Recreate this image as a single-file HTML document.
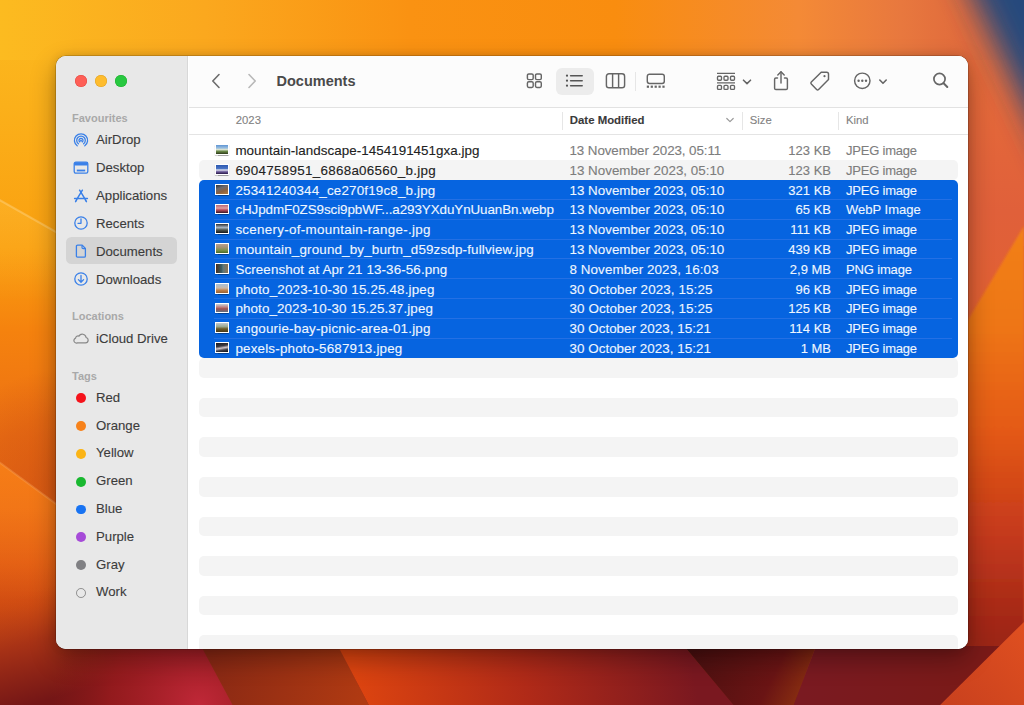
<!DOCTYPE html>
<html><head><meta charset="utf-8">
<style>
*{margin:0;padding:0;box-sizing:border-box}
html,body{width:1024px;height:705px;overflow:hidden}
body{position:relative;font-family:"Liberation Sans",sans-serif;background:#f59a14}
.row,.sbt{-webkit-text-stroke:0.12px currentColor}
#bg{position:absolute;left:0;top:0;width:1024px;height:705px}
#win{position:absolute;left:56px;top:56px;width:912px;height:593px;border-radius:10px;overflow:hidden;background:#fff;
 box-shadow:0 0 0 0.5px rgba(0,0,0,.3),0 0 10px rgba(0,0,0,.12),0 10px 26px rgba(0,0,0,.32)}
#side{position:absolute;left:0;top:0;width:132px;height:593px;background:#e8e8e8;border-right:1px solid #d8d8d8}
.tl{position:absolute;top:19px;width:12px;height:12px;border-radius:50%}
.sbh{position:absolute;left:16px;font-size:11px;line-height:13px;font-weight:bold;color:#a9a9a9;white-space:nowrap}
.sbt{position:absolute;left:40px;font-size:13.2px;line-height:15px;color:#3c3c3c;white-space:nowrap}
.sbi{position:absolute;left:17px;width:16px;height:16px;display:flex;align-items:center;justify-content:center}
.dot{position:absolute;left:19.9px;width:9.8px;height:9.8px;border-radius:50%}
.dot.work{border:1.4px solid #8c8c8c;background:transparent}
#selitem{position:absolute;left:9.8px;top:181.1px;width:111.2px;height:27px;border-radius:5.5px;background:#d4d4d4}
#main{position:absolute;left:133px;top:0;width:779px;height:593px;background:#fff}
#tb{position:absolute;left:0;top:0;width:779px;height:52px;border-bottom:1px solid #e2e2e2;background:#fcfcfc}
#title{position:absolute;left:87.5px;top:16.5px;font-size:14.5px;line-height:17px;font-weight:bold;color:#4a4a4a}
#hdr{position:absolute;left:0;top:52px;width:779px;height:27px;border-bottom:1px solid #e4e4e4}
.hd{position:absolute;top:5.5px;font-size:11.3px;line-height:13px;color:#828282;white-space:nowrap;-webkit-text-stroke:0.1px currentColor}
.hdiv{position:absolute;top:3.5px;width:1px;height:18px;background:#e6e6e6}
.stripe{position:absolute;left:10px;width:759px;height:19.8px;border-radius:5px;background:#f4f4f4}
#sel{position:absolute;left:10px;width:759px;border-radius:5px;background:#0664e0}
.sep{position:absolute;left:25px;width:738px;height:1px;background:#2470e4}
.row{position:absolute;left:0;width:779px;height:19.8px;font-size:13.4px;line-height:19.8px;color:#222;white-space:nowrap}
.row .sz,.row .kd{font-size:13px}
.row span{top:0.8px}
.row .nm{position:absolute;left:46.4px}
.row .dt{position:absolute;left:380.5px;color:#7d7d7d}
.row .sz{position:absolute;right:137px;color:#7d7d7d}
.row .kd{position:absolute;left:657px;color:#7d7d7d}
.row.sel,.row.sel span{color:#eef6ff}
.ico{position:absolute;left:25.8px;top:3.9px !important;width:14.2px;height:10.8px;background:#fff;box-shadow:0 0.5px 1px rgba(0,0,0,.35)}
.ico::after{content:"";position:absolute;left:1px;top:1px;right:1px;bottom:1px}
.i1::after{background:linear-gradient(#5f95d4 0%,#9cc0e0 35%,#d8e0d0 50%,#6a8a48 70%,#2e3a1a 100%)}
.i2::after{background:linear-gradient(#2a58b0 0%,#4a74c4 40%,#e0e4f0 55%,#6a5a98 75%,#2a1a48 100%)}
.i3::after{background:linear-gradient(160deg,#30343c 0%,#6a6a70 35%,#8a6040 65%,#b07a40 100%)}
.i4::after{background:linear-gradient(#b86878 0%,#e0a0a0 40%,#c05060 60%,#3a1828 100%)}
.i5::after{background:linear-gradient(#303438 0%,#a8b4c0 40%,#505850 65%,#18181a 100%)}
.i6::after{background:linear-gradient(#b8a090 0%,#a09070 40%,#7a9048 70%,#4a6a28 100%)}
.i7::after{background:linear-gradient(90deg,#4a3020 0%,#3a5a60 45%,#60787a 60%,#8a7050 100%)}
.i8::after{background:linear-gradient(#a8c0d8 0%,#c8b8a8 45%,#c08048 70%,#9a6030 100%)}
.i9::after{background:linear-gradient(#c8d0d8 0%,#c08080 40%,#a05050 60%,#607080 100%)}
.i10::after{background:linear-gradient(#c0c8d0 0%,#9aa890 40%,#6a5a28 65%,#4a3a18 100%)}
.i11::after{background:linear-gradient(170deg,#1a1a22 0%,#3a3840 35%,#d0c4c8 55%,#404048 75%,#101014 100%)}
.tbi{position:absolute}
</style></head><body>
<svg id="bg" width="1024" height="705" viewBox="0 0 1024 705">
 <defs>
  <linearGradient id="gTop" x1="0" y1="0" x2="1024" y2="0" gradientUnits="userSpaceOnUse">
   <stop offset="0" stop-color="#fcbb20"/>
   <stop offset="0.2" stop-color="#fba81e"/>
   <stop offset="0.4" stop-color="#fa9212"/>
   <stop offset="0.6" stop-color="#f98d0f"/>
   <stop offset="0.78" stop-color="#f48a36"/>
   <stop offset="0.88" stop-color="#e8783e"/>
   <stop offset="0.945" stop-color="#e06a3c"/>
   <stop offset="1" stop-color="#e06a3c"/>
  </linearGradient>
  <linearGradient id="gLeft" x1="0" y1="0" x2="0" y2="705" gradientUnits="userSpaceOnUse">
   <stop offset="0" stop-color="#fcbb20"/>
   <stop offset="0.15" stop-color="#fbb01a"/>
   <stop offset="0.35" stop-color="#faa010"/>
   <stop offset="0.47" stop-color="#f5820e"/>
   <stop offset="0.62" stop-color="#ec7014"/>
   <stop offset="0.72" stop-color="#ea6a16"/>
   <stop offset="0.8" stop-color="#e05a14"/>
   <stop offset="0.86" stop-color="#d04c12"/>
   <stop offset="0.92" stop-color="#b43a16"/>
   <stop offset="0.96" stop-color="#922616"/>
   <stop offset="1" stop-color="#761a16"/>
  </linearGradient>
  <linearGradient id="gRight" x1="0" y1="0" x2="0" y2="705" gradientUnits="userSpaceOnUse">
   <stop offset="0" stop-color="#e8703a"/>
   <stop offset="0.3" stop-color="#e0603a"/>
   <stop offset="0.5" stop-color="#e26030"/>
   <stop offset="1" stop-color="#c04020"/>
  </linearGradient>
  <linearGradient id="gRight2" x1="0" y1="230" x2="0" y2="705" gradientUnits="userSpaceOnUse">
   <stop offset="0" stop-color="#f2801a"/>
   <stop offset="0.2" stop-color="#ee7616"/>
   <stop offset="0.42" stop-color="#e45a12"/>
   <stop offset="0.62" stop-color="#c83c1c"/>
   <stop offset="0.82" stop-color="#a42818"/>
   <stop offset="1" stop-color="#861e16"/>
  </linearGradient>
  <linearGradient id="gNavy" x1="960" y1="0" x2="1024" y2="200" gradientUnits="userSpaceOnUse">
   <stop offset="0" stop-color="#2a4a7c" stop-opacity="0"/>
   <stop offset="0.35" stop-color="#2a4a7c" stop-opacity="0.9"/>
   <stop offset="1" stop-color="#2a4a7c" stop-opacity="1"/>
  </linearGradient>
  <linearGradient id="fb1" x1="0" y1="600" x2="30" y2="705" gradientUnits="userSpaceOnUse">
   <stop offset="0" stop-color="#c84a14" stop-opacity="0"/>
   <stop offset="0.45" stop-color="#a43016" stop-opacity="0.8"/>
   <stop offset="1" stop-color="#741616"/>
  </linearGradient>
  <radialGradient id="fb1c" cx="200" cy="705" r="150" gradientUnits="userSpaceOnUse">
   <stop offset="0" stop-color="#c02838" stop-opacity="1"/>
   <stop offset="0.6" stop-color="#a01c20" stop-opacity="0.7"/>
   <stop offset="1" stop-color="#8a1818" stop-opacity="0"/>
  </radialGradient>
  <linearGradient id="fb2" x1="210" y1="650" x2="360" y2="705" gradientUnits="userSpaceOnUse">
   <stop offset="0" stop-color="#882814"/>
   <stop offset="1" stop-color="#b03a12"/>
  </linearGradient>
  <linearGradient id="fb3" x1="360" y1="705" x2="690" y2="650" gradientUnits="userSpaceOnUse">
   <stop offset="0" stop-color="#dc4410"/>
   <stop offset="0.5" stop-color="#b02a18"/>
   <stop offset="1" stop-color="#7a1820"/>
  </linearGradient>
  <linearGradient id="fb4" x1="690" y1="650" x2="800" y2="705" gradientUnits="userSpaceOnUse">
   <stop offset="0" stop-color="#4a1010"/>
   <stop offset="0.7" stop-color="#6a1414"/>
   <stop offset="1" stop-color="#8a3010"/>
  </linearGradient>
  <linearGradient id="fb5" x1="800" y1="650" x2="960" y2="705" gradientUnits="userSpaceOnUse">
   <stop offset="0" stop-color="#7a1a22"/>
   <stop offset="1" stop-color="#7a1a18"/>
  </linearGradient>
  <linearGradient id="fb6" x1="1024" y1="620" x2="940" y2="705" gradientUnits="userSpaceOnUse">
   <stop offset="0" stop-color="#e05020"/>
   <stop offset="1" stop-color="#c8401e"/>
  </linearGradient>
  <linearGradient id="streak" x1="0" y1="0" x2="1" y2="0">
   <stop offset="0" stop-color="#fff" stop-opacity="0"/>
   <stop offset="0.5" stop-color="#fff" stop-opacity="0.25"/>
   <stop offset="1" stop-color="#fff" stop-opacity="0"/>
  </linearGradient>
  <radialGradient id="darkfacet" cx="60" cy="490" r="120" gradientUnits="userSpaceOnUse">
   <stop offset="0" stop-color="#c84a10" stop-opacity="0.6"/>
   <stop offset="0.6" stop-color="#c84a10" stop-opacity="0.3"/>
   <stop offset="1" stop-color="#c84a10" stop-opacity="0"/>
  </radialGradient>
  <linearGradient id="brightfacet" x1="0" y1="463" x2="0" y2="600" gradientUnits="userSpaceOnUse">
   <stop offset="0" stop-color="#ff8a18" stop-opacity="0.55"/>
   <stop offset="1" stop-color="#ff8a18" stop-opacity="0"/>
  </linearGradient>
  <linearGradient id="brightfacet2" x1="0" y1="200" x2="0" y2="300" gradientUnits="userSpaceOnUse">
   <stop offset="0" stop-color="#ffc040" stop-opacity="0.35"/>
   <stop offset="1" stop-color="#ffc040" stop-opacity="0"/>
  </linearGradient>
  <filter id="b12" x="-50%" y="-50%" width="200%" height="200%"><feGaussianBlur stdDeviation="15"/></filter>
  <filter id="b1"><feGaussianBlur stdDeviation="0.8"/></filter>
 </defs>
 <rect x="0" y="0" width="1024" height="705" fill="url(#gLeft)"/>
 <rect x="940" y="0" width="84" height="705" fill="url(#gRight)"/>
 <path d="M940 367 L1024 226 L1024 705 L940 705 Z" fill="url(#gRight2)" filter="url(#b1)"/>
 <rect x="0" y="0" width="1024" height="60" fill="url(#gTop)"/>
 <g filter="url(#b12)">
  <path d="M946 -60 L1070 -60 L1070 200 Z" fill="#27487c"/>
 </g>
 <path d="M0 463 L60 507 L60 340 L0 340 Z" fill="url(#darkfacet)"/>
 <path d="M0 463 L60 507 L60 600 L0 600 Z" fill="url(#brightfacet)"/>
 <path d="M0 461.5 L60 505.5 L60 508 L0 464 Z" fill="#ffb060" opacity="0.35"/>
 <path d="M0 200 L60 234 L60 300 L0 300 Z" fill="url(#brightfacet2)"/>
 <path d="M0 199 L60 233 L60 235.5 L0 201.5 Z" fill="#ffe0a0" opacity="0.35"/>
 <g>
  <path d="M-10 560 L165 560 L238 715 L-10 715 Z" fill="url(#fb1)"/>
  <path d="M-10 560 L165 560 L238 715 L-10 715 Z" fill="url(#fb1c)"/>
  <path d="M201 646 L338 646 L374 715 L238 715 Z" fill="url(#fb2)"/>
  <path d="M338 646 L684 646 L742 715 L374 715 Z" fill="url(#fb3)"/>
  <path d="M684 646 L816 646 L790 715 L742 715 Z" fill="url(#fb4)"/>
  <path d="M816 646 L1034 646 L1034 715 L790 715 Z" fill="url(#fb5)"/>
  <path d="M1034 612 L1034 715 L930 715 Z" fill="url(#fb6)"/>
 </g>
</svg>
<div id="win">
 <div id="side">
  <div class="tl" style="left:18.8px;background:#fe5f57;box-shadow:inset 0 0 0 .5px #e2463f"></div>
  <div class="tl" style="left:38.8px;background:#febc2e;box-shadow:inset 0 0 0 .5px #dea123"></div>
  <div class="tl" style="left:58.8px;background:#28c840;box-shadow:inset 0 0 0 .5px #1dad2b"></div>
  <div id="selitem"></div>
<div class="sbh" style="top:56.00px">Favourites</div>
<div class="sbt" style="top:76.40px">AirDrop</div>
<div class="sbi" style="top:76.00px"><svg width="16" height="16" viewBox="0 -1 16 16"><g fill="none" stroke="#3a80e8" stroke-width="1.3" stroke-linecap="round"><path d="M4.2 12.8A6.6 6.6 0 1 1 11.8 12.8"/><path d="M5.4 10.8A4.3 4.3 0 1 1 10.6 10.8"/><path d="M6.7 8.9A2 2 0 1 1 9.3 8.9"/></g><circle cx="8" cy="7.8" r="1" fill="#3a80e8"/></svg></div>
<div class="sbt" style="top:104.20px">Desktop</div>
<div class="sbi" style="top:103.80px"><svg width="16" height="14" viewBox="0 0 16 14"><rect x="1.2" y="1.2" width="13.6" height="11" rx="1.6" fill="none" stroke="#3a80e8" stroke-width="1.3"/><rect x="1.2" y="1.2" width="13.6" height="3.4" rx="1" fill="#3a80e8"/><rect x="3.8" y="8.6" width="8.4" height="1.8" fill="#3a80e8"/></svg></div>
<div class="sbt" style="top:132.00px">Applications</div>
<div class="sbi" style="top:131.60px"><svg width="16" height="14" viewBox="0 0 16 14"><g fill="none" stroke="#3a80e8" stroke-width="1.5" stroke-linecap="round" stroke-linejoin="round"><path d="M6.6 1.2L8 3.4L9.4 1.2"/><path d="M8 3.4L3.2 11.4"/><path d="M8 3.4L12.8 11.4"/><path d="M1.6 9.4H14.4"/><path d="M2.6 12.6L3.4 11.3"/><path d="M13.4 12.6L12.6 11.3"/></g></svg></div>
<div class="sbt" style="top:159.80px">Recents</div>
<div class="sbi" style="top:159.40px"><svg width="16" height="16" viewBox="0 0 16 16"><circle cx="8" cy="8" r="6.2" fill="none" stroke="#3a80e8" stroke-width="1.3"/><path d="M8 4V8.3H5" fill="none" stroke="#3a80e8" stroke-width="1.3" stroke-linecap="round" stroke-linejoin="round"/></svg></div>
<div class="sbt" style="top:187.70px">Documents</div>
<div class="sbi" style="top:187.30px"><svg width="14" height="16" viewBox="0 0 14 16"><path d="M3.6 2.2H8.2L11.4 5.4V12.9Q11.4 14.1 10.2 14.1H3.6Q2.4 14.1 2.4 12.9V3.4Q2.4 2.2 3.6 2.2Z" fill="none" stroke="#3a80e8" stroke-width="1.3" stroke-linejoin="round"/><path d="M8 2.4V4.4Q8 5.6 9.2 5.6H11.2" fill="none" stroke="#3a80e8" stroke-width="1.2"/></svg></div>
<div class="sbt" style="top:215.50px">Downloads</div>
<div class="sbi" style="top:215.10px"><svg width="16" height="16" viewBox="0 0 16 16"><circle cx="8" cy="8" r="6.2" fill="none" stroke="#3a80e8" stroke-width="1.3"/><path d="M8 4.4V11M5.4 8.6L8 11.2L10.6 8.6" fill="none" stroke="#3a80e8" stroke-width="1.3" stroke-linecap="round" stroke-linejoin="round"/></svg></div>
<div class="sbh" style="top:253.60px">Locations</div>
<div class="sbt" style="top:274.50px">iCloud Drive</div>
<div class="sbi" style="top:274.10px"><svg width="18" height="12" viewBox="-0.5 -0.5 18 12"><path d="M4.4 11H13.6A3.1 3.1 0 0 0 14.2 4.9A4.3 4.3 0 0 0 6.2 3.4A2.8 2.8 0 0 0 2.4 5.6A2.7 2.7 0 0 0 4.4 11Z" fill="none" stroke="#888" stroke-width="1.35" stroke-linejoin="round"/></svg></div>
<div class="sbh" style="top:313.60px">Tags</div>
<div class="sbt" style="top:333.80px">Red</div>
<div class="dot" style="top:337.40px;background:#f5131b"></div>
<div class="sbt" style="top:361.60px">Orange</div>
<div class="dot" style="top:365.20px;background:#f7821b"></div>
<div class="sbt" style="top:389.40px">Yellow</div>
<div class="dot" style="top:393.00px;background:#fbb416"></div>
<div class="sbt" style="top:417.20px">Green</div>
<div class="dot" style="top:420.80px;background:#19b830"></div>
<div class="sbt" style="top:445.00px">Blue</div>
<div class="dot" style="top:448.60px;background:#1873f2"></div>
<div class="sbt" style="top:472.80px">Purple</div>
<div class="dot" style="top:476.40px;background:#a64bd8"></div>
<div class="sbt" style="top:500.60px">Gray</div>
<div class="dot" style="top:504.20px;background:#808083"></div>
<div class="sbt" style="top:528.40px">Work</div>
<div class="dot work" style="top:532.00px"></div>
 </div>
 <div id="main">
  <div id="tb">
   <svg class="tbi" style="left:21px;top:17px" width="12" height="16" viewBox="0 0 12 16"><path d="M9 1.5L2.8 8L9 14.5" fill="none" stroke="#6d6d6d" stroke-width="1.6" stroke-linecap="round" stroke-linejoin="round"/></svg>
   <svg class="tbi" style="left:57px;top:17px" width="12" height="16" viewBox="0 0 12 16"><path d="M3 1.5L9.2 8L3 14.5" fill="none" stroke="#b8b8b8" stroke-width="1.6" stroke-linecap="round" stroke-linejoin="round"/></svg>
   <div id="title">Documents</div>
   <!-- icon view -->
   <svg class="tbi" style="left:335.5px;top:16px" width="18" height="18" viewBox="0 0 18 18"><g fill="none" stroke="#666" stroke-width="1.45"><rect x="2.4" y="1.9" width="5.8" height="5.7" rx="1.4"/><rect x="10.5" y="1.9" width="5.8" height="5.7" rx="1.4"/><rect x="2.4" y="9.8" width="5.8" height="5.7" rx="1.4"/><rect x="10.5" y="9.8" width="5.8" height="5.7" rx="1.4"/></g></svg>
   <div style="position:absolute;left:366.7px;top:12px;width:38px;height:26.5px;border-radius:6px;background:#ececec"></div>
   <svg class="tbi" style="left:374.9px;top:16px" width="20" height="18" viewBox="0 0 20 18"><g fill="#555"><circle cx="3" cy="3.7" r="1.1"/><circle cx="3" cy="8.7" r="1.1"/><circle cx="3" cy="13.7" r="1.1"/></g><g stroke="#555" stroke-width="1.5" stroke-linecap="round"><path d="M6.6 3.7H18.2M6.6 8.7H18.2M6.6 13.7H18.2"/></g></svg>
   <svg class="tbi" style="left:414.8px;top:16px" width="22" height="18" viewBox="0 0 22 18"><g fill="none" stroke="#666" stroke-width="1.45"><rect x="2.4" y="1.8" width="18.2" height="14" rx="2.6"/><path d="M8.6 1.8V15.8M14.6 1.8V15.8"/></g></svg>
   <div style="position:absolute;left:446.2px;top:16px;width:1px;height:19px;background:#e6e6e6"></div>
   <svg class="tbi" style="left:456px;top:16px" width="22" height="18" viewBox="0 0 22 18"><rect x="2.3" y="2.2" width="17" height="9.3" rx="2.2" fill="none" stroke="#666" stroke-width="1.45"/><g fill="#666"><rect x="1.8" y="13.6" width="2.2" height="2.2"/><rect x="5.7" y="13.6" width="2.2" height="2.2"/><rect x="9.6" y="13.6" width="2.2" height="2.2"/><rect x="13.5" y="13.6" width="2.2" height="2.2"/><rect x="17.4" y="13.6" width="2.2" height="2.2"/></g></svg>
   <!-- group -->
   <svg class="tbi" style="left:525.7px;top:15.6px" width="22" height="20" viewBox="0 0 22 20"><g stroke="#666" stroke-width="1.35" fill="none"><path d="M2 1.3H20M2 10.8H20"/><rect x="2.5" y="4.2" width="4" height="4" rx="1"/><rect x="9" y="4.2" width="4" height="4" rx="1"/><rect x="15.5" y="4.2" width="4" height="4" rx="1"/><rect x="2.5" y="13.4" width="4" height="4" rx="1"/><rect x="9" y="13.4" width="4" height="4" rx="1"/><rect x="15.5" y="13.4" width="4" height="4" rx="1"/></g></svg>
   <svg class="tbi" style="left:553.3px;top:21.7px" width="10" height="8" viewBox="0 0 10 8"><path d="M1.5 2.2L5 5.6L8.5 2.2" fill="none" stroke="#666" stroke-width="1.6" stroke-linecap="round" stroke-linejoin="round"/></svg>
   <!-- share -->
   <svg class="tbi" style="left:582.9px;top:13.6px" width="18" height="22" viewBox="0 0 18 22"><g fill="none" stroke="#666" stroke-width="1.45" stroke-linecap="round" stroke-linejoin="round"><path d="M5.5 8H3.9Q2.6 8 2.6 9.3V18.2Q2.6 19.5 3.9 19.5H14.1Q15.4 19.5 15.4 18.2V9.3Q15.4 8 14.1 8H12.5"/><path d="M9 13V2"/><path d="M5.8 5L9 1.8L12.2 5"/></g></svg>
   <!-- tag -->
   <svg class="tbi" style="left:620px;top:14px" width="22" height="22" viewBox="0 0 22 22"><g fill="none" stroke="#666" stroke-width="1.45" stroke-linejoin="round"><path d="M12.2 2.2H17.6Q19.5 2.2 19.5 4.1V9.5L9.6 19.4Q8.6 20.4 7.6 19.4L2.3 14.1Q1.3 13.1 2.3 12.1Z"/></g><circle cx="15.5" cy="6.2" r="1.1" fill="#666"/></svg>
   <!-- more -->
   <svg class="tbi" style="left:662.8px;top:15px" width="20" height="20" viewBox="0 0 20 20"><circle cx="10.3" cy="9.8" r="7.7" fill="none" stroke="#666" stroke-width="1.45"/><g fill="#666"><circle cx="6.6" cy="9.8" r="1.2"/><circle cx="10.3" cy="9.8" r="1.2"/><circle cx="14" cy="9.8" r="1.2"/></g></svg>
   <svg class="tbi" style="left:688.5px;top:21.5px" width="10" height="8" viewBox="0 0 10 8"><path d="M1.8 2L5 5.3L8.2 2" fill="none" stroke="#666" stroke-width="1.6" stroke-linecap="round" stroke-linejoin="round"/></svg>
   <!-- search -->
   <svg class="tbi" style="left:742px;top:14.8px" width="20" height="20" viewBox="0 0 20 20"><circle cx="8.5" cy="8" r="5.6" fill="none" stroke="#666" stroke-width="1.7"/><path d="M12.6 12.3L16.3 16" stroke="#666" stroke-width="2" stroke-linecap="round"/></svg>
  </div>
  <div id="hdr">
   <div class="hd" style="left:46.8px">2023</div>
   <div class="hdiv" style="left:373px"></div>
   <div class="hd" style="left:380.8px;font-weight:bold;color:#3a3a3a;font-size:11.4px">Date Modified</div>
   <svg class="tbi" style="left:535.5px;top:8px" width="10" height="8" viewBox="0 0 10 8"><path d="M1.8 2.5L5 5.6L8.2 2.5" fill="none" stroke="#9a9a9a" stroke-width="1.2" stroke-linecap="round" stroke-linejoin="round"/></svg>
   <div class="hdiv" style="left:552.5px"></div>
   <div class="hd" style="left:560.8px">Size</div>
   <div class="hdiv" style="left:649px"></div>
   <div class="hd" style="left:657px">Kind</div>
  </div>
<div class="stripe" style="top:104.10px"></div>
<div class="stripe" style="top:302.10px"></div>
<div class="stripe" style="top:341.70px"></div>
<div class="stripe" style="top:381.30px"></div>
<div class="stripe" style="top:420.90px"></div>
<div class="stripe" style="top:460.50px"></div>
<div class="stripe" style="top:500.10px"></div>
<div class="stripe" style="top:539.70px"></div>
<div class="stripe" style="top:579.30px"></div>
  <div id="sel" style="top:123.90px;height:178.20px"></div>
<div class="sep" style="top:142.90px"></div>
<div class="sep" style="top:162.70px"></div>
<div class="sep" style="top:182.50px"></div>
<div class="sep" style="top:202.30px"></div>
<div class="sep" style="top:222.10px"></div>
<div class="sep" style="top:241.90px"></div>
<div class="sep" style="top:261.70px"></div>
<div class="sep" style="top:281.50px"></div>
<div class="row" style="top:84.30px"><span class="ico i1"></span><span class="nm" style="letter-spacing:0.040px">mountain-landscape-1454191451gxa.jpg</span><span class="dt" style="letter-spacing:-0.098px">13 November 2023, 05:11</span><span class="sz">123 KB</span><span class="kd" style="letter-spacing:-0.208px">JPEG image</span></div>
<div class="row" style="top:104.10px"><span class="ico i2"></span><span class="nm" style="letter-spacing:0.286px">6904758951_6868a06560_b.jpg</span><span class="dt" style="letter-spacing:-0.002px">13 November 2023, 05:10</span><span class="sz">123 KB</span><span class="kd" style="letter-spacing:-0.208px">JPEG image</span></div>
<div class="row sel" style="top:123.90px"><span class="ico i3"></span><span class="nm" style="letter-spacing:0.178px">25341240344_ce270f19c8_b.jpg</span><span class="dt" style="letter-spacing:-0.002px">13 November 2023, 05:10</span><span class="sz">321 KB</span><span class="kd" style="letter-spacing:-0.208px">JPEG image</span></div>
<div class="row sel" style="top:143.70px"><span class="ico i4"></span><span class="nm" style="letter-spacing:-0.072px">cHJpdmF0ZS9sci9pbWF...a293YXduYnUuanBn.webp</span><span class="dt" style="letter-spacing:-0.002px">13 November 2023, 05:10</span><span class="sz">65 KB</span><span class="kd" style="letter-spacing:0.010px">WebP Image</span></div>
<div class="row sel" style="top:163.50px"><span class="ico i5"></span><span class="nm" style="letter-spacing:0.286px">scenery-of-mountain-range-.jpg</span><span class="dt" style="letter-spacing:-0.002px">13 November 2023, 05:10</span><span class="sz">111 KB</span><span class="kd" style="letter-spacing:-0.208px">JPEG image</span></div>
<div class="row sel" style="top:183.30px"><span class="ico i6"></span><span class="nm" style="letter-spacing:0.166px">mountain_ground_by_burtn_d59zsdp-fullview.jpg</span><span class="dt" style="letter-spacing:-0.002px">13 November 2023, 05:10</span><span class="sz">439 KB</span><span class="kd" style="letter-spacing:-0.208px">JPEG image</span></div>
<div class="row sel" style="top:203.10px"><span class="ico i7"></span><span class="nm" style="letter-spacing:0.107px">Screenshot at Apr 21 13-36-56.png</span><span class="dt" style="letter-spacing:0.081px">8 November 2023, 16:03</span><span class="sz">2,9 MB</span><span class="kd" style="letter-spacing:-0.149px">PNG image</span></div>
<div class="row sel" style="top:222.90px"><span class="ico i8"></span><span class="nm" style="letter-spacing:0.161px">photo_2023-10-30 15.25.48.jpeg</span><span class="dt" style="letter-spacing:0.104px">30 October 2023, 15:25</span><span class="sz">96 KB</span><span class="kd" style="letter-spacing:-0.208px">JPEG image</span></div>
<div class="row sel" style="top:242.70px"><span class="ico i9"></span><span class="nm" style="letter-spacing:0.109px">photo_2023-10-30 15.25.37.jpeg</span><span class="dt" style="letter-spacing:0.104px">30 October 2023, 15:25</span><span class="sz">125 KB</span><span class="kd" style="letter-spacing:-0.208px">JPEG image</span></div>
<div class="row sel" style="top:262.50px"><span class="ico i10"></span><span class="nm" style="letter-spacing:0.198px">angourie-bay-picnic-area-01.jpg</span><span class="dt" style="letter-spacing:0.033px">30 October 2023, 15:21</span><span class="sz">114 KB</span><span class="kd" style="letter-spacing:-0.208px">JPEG image</span></div>
<div class="row sel" style="top:282.30px"><span class="ico i11"></span><span class="nm" style="letter-spacing:0.192px">pexels-photo-5687913.jpeg</span><span class="dt" style="letter-spacing:0.033px">30 October 2023, 15:21</span><span class="sz">1 MB</span><span class="kd" style="letter-spacing:-0.208px">JPEG image</span></div>
 </div>
</div>
</body></html>
